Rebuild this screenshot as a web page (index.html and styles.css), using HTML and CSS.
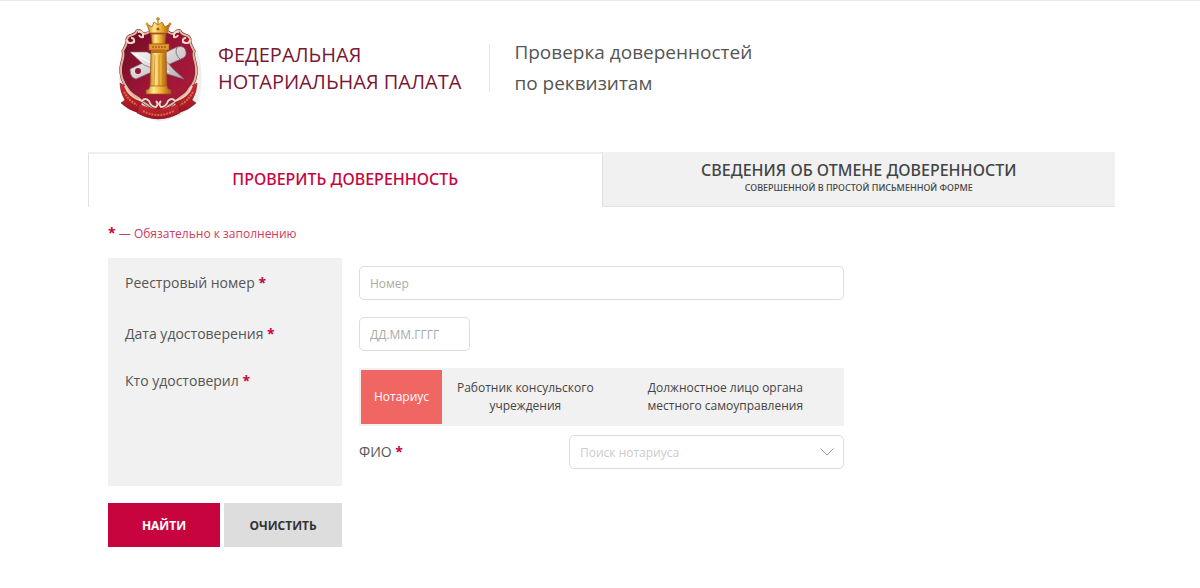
FILE: index.html
```html
<!DOCTYPE html>
<html lang="ru">
<head>
    <meta charset="UTF-8">
    <meta name="viewport" content="width=device-width, initial-scale=1.0">
    <title>Проверка доверенностей по реквизитам</title>
    <link rel="stylesheet" href="styles.css">
</head>
<body>
<div class="container">
    <header class="header">
        <a href="#" class="logo">
            <svg class="emblem" viewBox="0 -2 100 120" aria-hidden="true">
                <defs>
                    <linearGradient id="gold" x1="0" x2="1" y1="0" y2="0">
                        <stop offset="0" stop-color="#c47a1c"/>
                        <stop offset=".3" stop-color="#ffe98c"/>
                        <stop offset=".6" stop-color="#f0b232"/>
                        <stop offset="1" stop-color="#a85a14"/>
                    </linearGradient>
                    <linearGradient id="wine" x1="0" x2="1" y1="0" y2="1">
                        <stop offset="0" stop-color="#6a0a25"/>
                        <stop offset=".5" stop-color="#9c1535"/>
                        <stop offset="1" stop-color="#ad1c3c"/>
                    </linearGradient>
                    <linearGradient id="steel" x1="0" x2="1" y1="0" y2="1">
                        <stop offset="0" stop-color="#fbf9f9"/>
                        <stop offset="1" stop-color="#b5afb3"/>
                    </linearGradient>
                    <linearGradient id="ribbon" x1="0" x2="0" y1="0" y2="1">
                        <stop offset="0" stop-color="#cf2a33"/>
                        <stop offset="1" stop-color="#9c1423"/>
                    </linearGradient>
                </defs>
                <!-- тень -->
                <path d="M12 40 Q5 70 14 92 Q30 106 49 112 Q72 108 88 92 Q96 64 86 38Z" fill="#d8d3d3" opacity=".4"/>
                <!-- щит -->
                <path d="M49 18 C43 18 39 24 34 24 C31 23 30 19 27 21 C25 27 19 23 17 29 C18 33 15 37 13 41 C15 47 11 52 11 58 C10 68 14 74 18 79 C22 86 29 87 32 91 C38 96 43 98 49 101 C55 98 60 96 66 91 C69 87 76 86 79 79 C84 74 87 68 86 58 C86 52 82 47 84 41 C82 37 79 33 80 29 C78 23 72 27 70 21 C67 19 66 23 63 24 C59 24 54 18 49 18Z" fill="url(#wine)" stroke="#6b1f2c" stroke-width="3"/>
                <path d="M49 18 C43 18 39 24 34 24 C31 23 30 19 27 21 C25 27 19 23 17 29 C18 33 15 37 13 41 C15 47 11 52 11 58 C10 68 14 74 18 79 C22 86 29 87 32 91 C38 96 43 98 49 101 C55 98 60 96 66 91 C69 87 76 86 79 79 C84 74 87 68 86 58 C86 52 82 47 84 41 C82 37 79 33 80 29 C78 23 72 27 70 21 C67 19 66 23 63 24 C59 24 54 18 49 18Z" fill="none" stroke="#e3b29c" stroke-width="2"/>
                <path d="M28 22 Q34 21 33 27 Q30 28 29 25 M17 30 Q18 35 24 32 Q25 28 21 28 M69 22 Q63 21 64 27 Q67 28 68 25 M80 30 Q79 35 73 32 Q72 28 76 28" fill="none" stroke="#f5d9c9" stroke-width="2"/>
                <!-- свиток и перо -->
                <path d="M20 59 L67 37 Q75 35 76 42 Q77 47 71 49 L26 69 Q20 68 20 59Z" fill="url(#steel)" stroke="#77656a" stroke-width=".7"/>
                <path d="M67 37 Q64 44 70 49" fill="none" stroke="#81777b"/>
                <circle cx="28" cy="61" r="3" fill="#9a1735"/>
                <path d="M20 42 L37 42 L58 53 L63 59 L74 69 L54 63 L34 55Z" fill="url(#steel)" stroke="#796d72" stroke-width=".7"/>
                <path d="M22 43 L59 62" fill="none" stroke="#fff"/>
                <!-- лента -->
                <path d="M10 73 L15 76 Q17 85 32 91 L29 103 Q18 100 11 93 L15 90 Q10 82 10 73Z" fill="url(#ribbon)" stroke="#711425" stroke-width=".5"/>
                <path d="M87 73 L82 76 Q80 85 65 91 L68 103 Q79 100 86 93 L82 90 Q87 82 87 73Z" fill="url(#ribbon)" stroke="#711425" stroke-width=".5"/>
                <path d="M29 94 Q48 104 68 94 L70 103 Q48 115 27 103Z" fill="url(#ribbon)" stroke="#7b1325" stroke-width=".5"/>
                <path d="M33 101 Q48 109 64 101 M14 82 Q19 91 27 95 M83 82 Q78 91 70 95" fill="none" stroke="#d96a40" stroke-width="2" stroke-dasharray="2 1"/>
                <path d="M32 91 Q35 87 39 91 Q41 97 46 97 Q49 94 46 91 M65 91 Q62 87 58 91 Q56 97 51 97 Q48 94 51 91" fill="none" stroke="#6b1f2c" stroke-width="3"/>
                <path d="M15 76 Q19 87 32 91 Q35 87 39 91 Q41 97 46 97 Q49 94 46 91 M82 76 Q78 87 65 91 Q62 87 58 91 Q56 97 51 97 Q48 94 51 91" fill="none" stroke="#f3d2c1" stroke-width="2"/>
                <!-- колонна -->
                <path d="M41 42 H56 L57 77 H40Z" fill="url(#gold)" stroke="#9b5317" stroke-width=".7"/>
                <path d="M45 45 L44 76 M49 45 V76 M53 45 V76" stroke="#ba741c" stroke-width=".7"/>
                <path d="M40 76 H57 L58 79 L61 80 V84 H36 V80 L39 79Z" fill="url(#gold)" stroke="#9b5317" stroke-width=".7"/>
                <path d="M41 24 H56 L55 34 H42Z" fill="url(#gold)" stroke="#9b5317" stroke-width=".7"/>
                <rect x="39" y="34" width="20" height="6" fill="#e09a2d" stroke="#a45d18" stroke-width=".7"/>
                <path d="M42 37 H56" stroke="#8e4312" stroke-dasharray="2 1"/>
                <path d="M41 40 H57 V43 H41Z" fill="#b9701d"/>
                <path d="M40 23 L37 14 L42 17 L44 12 L48 15 L52 12 L55 17 L60 14 L57 23Z" fill="url(#gold)" stroke="#b87420" stroke-width="1"/>
                <path d="M48 7 V14 M46 9 H50" stroke="#c78a24" stroke-width="1.5"/>
                <circle cx="37" cy="14" r="1.5" fill="#dca232"/>
                <circle cx="60" cy="14" r="1.5" fill="#c98a2b"/>
                <circle cx="48" cy="19" r="1.5" fill="#a8581b"/>
            </svg>
            <span class="logo-text">ФЕДЕРАЛЬНАЯ<br>НОТАРИАЛЬНАЯ ПАЛАТА</span>
        </a>
        <div class="divider"></div>
        <h1 class="title">Проверка доверенностей<br>по реквизитам</h1>
    </header>

    <nav class="tabs">
        <a href="#" class="tab active">ПРОВЕРИТЬ ДОВЕРЕННОСТЬ</a>
        <a href="#" class="tab">СВЕДЕНИЯ ОБ ОТМЕНЕ ДОВЕРЕННОСТИ
            <small>СОВЕРШЕННОЙ В ПРОСТОЙ ПИСЬМЕННОЙ ФОРМЕ</small>
        </a>
    </nav>

    <form class="form">
        <p class="note"><b class="req">*</b> — Обязательно к заполнению</p>
        <div class="form-body">
            <div class="labels">
                <label for="number">Реестровый номер <b class="req">*</b></label>
                <label for="date">Дата удостоверения <b class="req">*</b></label>
                <span id="whoLabel">Кто удостоверил <b class="req">*</b></span>
            </div>
            <div class="fields">
                <input type="text" id="number" class="input" placeholder="Номер">
                <input type="text" id="date" class="input input-date" placeholder="ДД.ММ.ГГГГ">
                <div class="switch" role="radiogroup" aria-labelledby="whoLabel">
                    <label class="option"><input type="radio" name="who" checked><span>Нотариус</span></label>
                    <label class="option"><input type="radio" name="who"><span>Работник консульского учреждения</span></label>
                    <label class="option"><input type="radio" name="who"><span>Должностное лицо органа местного самоуправления</span></label>
                </div>
                <div class="fio">
                    <label for="notary">ФИО <b class="req">*</b></label>
                    <div class="select-wrap">
                        <select id="notary" class="input select">
                            <option>Поиск нотариуса</option>
                        </select>
                        <svg class="arrow" viewBox="0 0 14 8" aria-hidden="true"><path d="M.5 .5 L7 7 L13.5 .5"/></svg>
                    </div>
                </div>
            </div>
        </div>
        <div class="buttons">
            <button type="submit" class="btn btn-find">НАЙТИ</button>
            <button type="reset" class="btn btn-clear">ОЧИСТИТЬ</button>
        </div>
    </form>
</div>
</body>
</html>
```

FILE: styles.css
```css
* {
    box-sizing: border-box;
}
body {
    margin: 0;
    border-top: 1px solid #ebebeb;
    background: #fff;
    font-family: "Open Sans", "Noto Sans", sans-serif;
    font-size: 14px;
    line-height: 20px;
    color: #555;
}
.container {
    max-width: 1200px;
    margin: 0 auto;
    padding: 0 85px 0 88px;
}
.header {
    display: flex;
    align-items: center;
    height: 151px;
    padding: 0 22px 17px;
}
.logo {
    display: flex;
    align-items: center;
    gap: 8px;
    color: #7a1636;
    text-decoration: none;
}
.emblem {
    width: 100px;
    height: 120px;
}
.logo-text {
    font-size: 20px;
    line-height: 27px;
}
.divider {
    width: 1px;
    height: 48px;
    margin: 0 24px 0 28px;
    background: #e8e8e8;
}
.title {
    margin: 0;
    font-size: 19px;
    font-weight: 400;
    line-height: 31px;
}
.tabs {
    display: grid;
    grid-template-columns: 1fr 1fr;
    height: 55px;
}
.tab {
    display: flex;
    flex-direction: column;
    align-items: center;
    justify-content: center;
    padding-bottom: 4px;
    background: #f1f1f1;
    border-bottom: 1px solid #e2e2e2;
    border-left: 1px solid #e2e2e2;
    color: #444;
    font-family: "Noto Sans", "Open Sans", sans-serif;
    font-size: 16px;
    font-weight: 500;
    text-decoration: none;
}
.tab small {
    font-size: 9px;
    line-height: 15px;
}
.tab.active {
    background: #fff;
    border-top: 2px solid #efefef;
    border-bottom: none;
    color: #c8043e;
}
.form {
    padding: 17px 20px;
}
.req {
    color: #c8043e;
    font-weight: 700;
}
.note {
    margin: 0 0 14px;
    font-size: 12px;
    line-height: 20px;
    color: #cd3a60;
}
.note .req {
    font-size: 14px;
    line-height: 1;
}
.form-body {
    display: grid;
    grid-template-columns: 234px minmax(0, 485px);
    gap: 17px;
}
.labels {
    display: flex;
    flex-direction: column;
    gap: 17px;
    min-height: 228px;
    padding: 8px 17px;
    line-height: 34px;
    background: #f1f1f1;
}
.labels span {
    line-height: 26px;
}
.fields {
    display: flex;
    flex-direction: column;
    gap: 17px;
    padding-top: 8px;
}
.input {
    width: 100%;
    height: 34px;
    padding: 0 10px;
    border: 1px solid #ddd;
    border-radius: 5px;
    background: #fff;
    font-family: inherit;
    font-size: 12px;
    color: #444;
}
.input::placeholder {
    color: #aaa;
}
.input-date {
    width: 111px;
}
.switch {
    display: grid;
    grid-template-columns: 81px 5fr 7fr;
    padding: 2px;
    background: #f1f1f1;
    font-size: 12px;
    line-height: 18px;
    text-align: center;
    color: #444;
}
.option {
    display: flex;
    min-height: 54px;
    cursor: pointer;
}
.option input {
    appearance: none;
    width: 0;
    margin: 0;
}
.option span {
    flex: 1;
    display: flex;
    align-items: center;
    justify-content: center;
    padding: 0 8px;
}
.option:last-child span {
    padding: 0 36px;
}
.option input:checked + span {
    background: #f06662;
    color: #fff;
}
.fio {
    display: flex;
    align-items: center;
    justify-content: space-between;
    margin-top: -8px;
}
.select-wrap {
    position: relative;
    width: 275px;
}
.select {
    display: block;
    appearance: none;
    color: #ccc;
}
.arrow {
    position: absolute;
    top: 13px;
    right: 10px;
    width: 14px;
    height: 8px;
    fill: none;
    stroke: #999;
    pointer-events: none;
}
.buttons {
    display: flex;
    gap: 4px;
    margin-top: 17px;
}
.btn {
    height: 44px;
    border: none;
    font-family: inherit;
    font-size: 12px;
    font-weight: 700;
    cursor: pointer;
}
.btn-find {
    width: 112px;
    background: #c8043e;
    color: #fff;
}
.btn-clear {
    width: 118px;
    background: #ddd;
    color: #333;
}
```
